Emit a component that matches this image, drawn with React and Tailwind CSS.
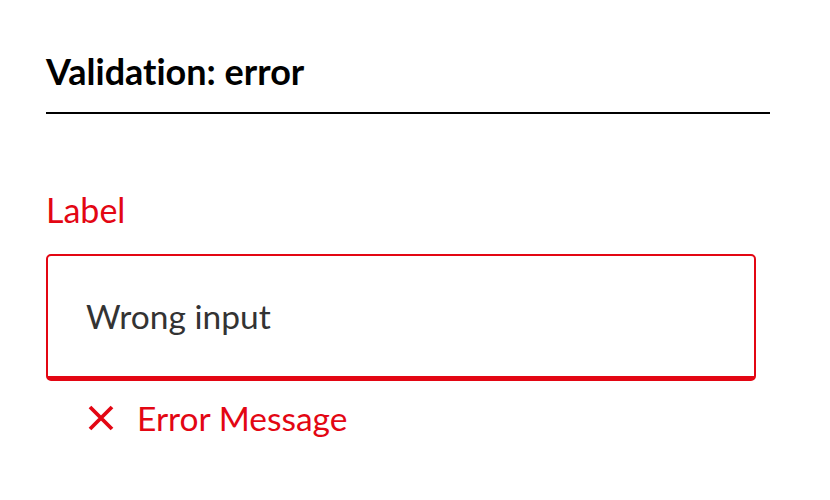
import React from 'react';

const ErrorIcon = () => (
    <svg width="26" height="26" viewBox="0 0 26 26" className="shrink-0">
        <path d="M2 2 L24 24 M24 2 L2 24" stroke="#e30613" strokeWidth="3.8" strokeLinecap="butt" fill="none" />
    </svg>
);

export default function App() {
    return (
        <div className="min-h-screen bg-white pl-[46px] pt-[53px] font-['Lato','Noto_Sans',sans-serif] [font-variant-ligatures:none]">
            <div className="w-[724px] border-b-2 border-black pb-[23px]">
                <h2 className="text-[36px] leading-[36px] font-bold text-black">Validation: error</h2>
            </div>

            <div className="mt-[78px] w-[710px]">
                <label className="block text-[34px] leading-[36px] text-[#e30613]">Label</label>
                <div className="mt-[26px] h-[127px] rounded-[5px] border-2 border-b-[5px] border-[#e30613] flex items-center px-[38px]">
                    <span className="text-[33.5px] leading-[36px] text-[#333333]">Wrong input</span>
                </div>
                <div className="mt-[19px] flex items-center gap-[23px] pl-[42px]">
                    <ErrorIcon />
                    <span className="text-[33.5px] leading-[36px] text-[#e30613]">Error Message</span>
                </div>
            </div>
        </div>
    );
}
